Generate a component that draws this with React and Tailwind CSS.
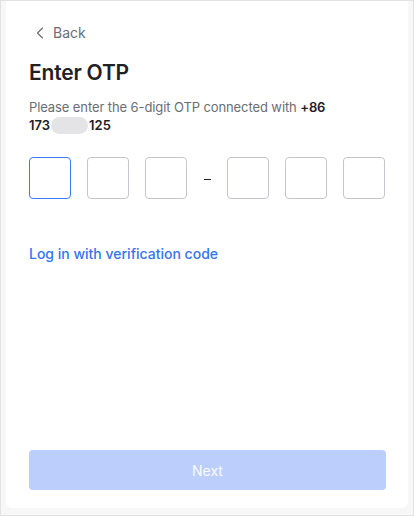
import { ChevronLeft } from 'lucide-react';

const boxes = [0, 1, 2];

function OtpBox({ active }) {
  return (
    <div
      className={`w-[42px] h-[42px] rounded-[4px] border ${active ? 'border-[#3a7bf5]' : 'border-[#c5c6cb]'} bg-white`}
    />
  );
}

export default function App() {
  return (
    <div className="h-[516px] w-[414px] border border-[#e2e2e2] bg-[#f7f7f7] px-[5px] pb-[7px] font-['Inter',sans-serif]">
      <div className="h-full bg-white rounded-b-[6px] pl-[23px] pr-[22px] pt-[22px] pb-[18px] flex flex-col">
        {/* Back */}
        <button className="flex items-center h-[20px] gap-[3px] text-[#6b6d73] text-[14px] leading-[20px] self-start">
          <ChevronLeft className="w-[20px] h-[20px] ml-[1px]" strokeWidth={1.4} />
          <span>Back</span>
        </button>

        <h1 className="mt-[16px] text-[21px] leading-[28px] font-semibold text-[#1f2125] tracking-[-0.2px]">Enter OTP</h1>

        <p className="mt-[11px] text-[13px] leading-[18px] text-[#6b6d73] tracking-[-0.1px]">
          Please enter the 6-digit OTP connected with <span className="font-semibold text-[#1f2125]">+86</span>
        </p>
        <div className="flex items-center text-[13px] leading-[18px] font-semibold text-[#1f2125]">
          <span>173</span>
          <span className="w-[37px] h-[17px] rounded-full bg-[#e4e4e6] mx-[1px]" />
          <span>125</span>
        </div>

        {/* OTP inputs */}
        <div className="mt-[23px] flex items-center">
          <div className="flex gap-[16px]">
            {boxes.map(i => (
              <OtpBox key={i} active={i === 0} />
            ))}
          </div>
          <div className="w-[40px] flex justify-center">
            <div className="w-[7px] h-px bg-[#1f2125] mt-[2px]" />
          </div>
          <div className="flex gap-[16px]">
            {boxes.map(i => (
              <OtpBox key={i} />
            ))}
          </div>
        </div>

        <a className="mt-[45px] text-[14px] leading-[20px] font-medium text-[#3573f0] self-start">
          Log in with verification code
        </a>

        <button className="mt-auto h-[40px] w-full rounded-[4px] bg-[#bccefb] text-white/90 text-[14px]">
          Next
        </button>
      </div>
    </div>
  );
}
